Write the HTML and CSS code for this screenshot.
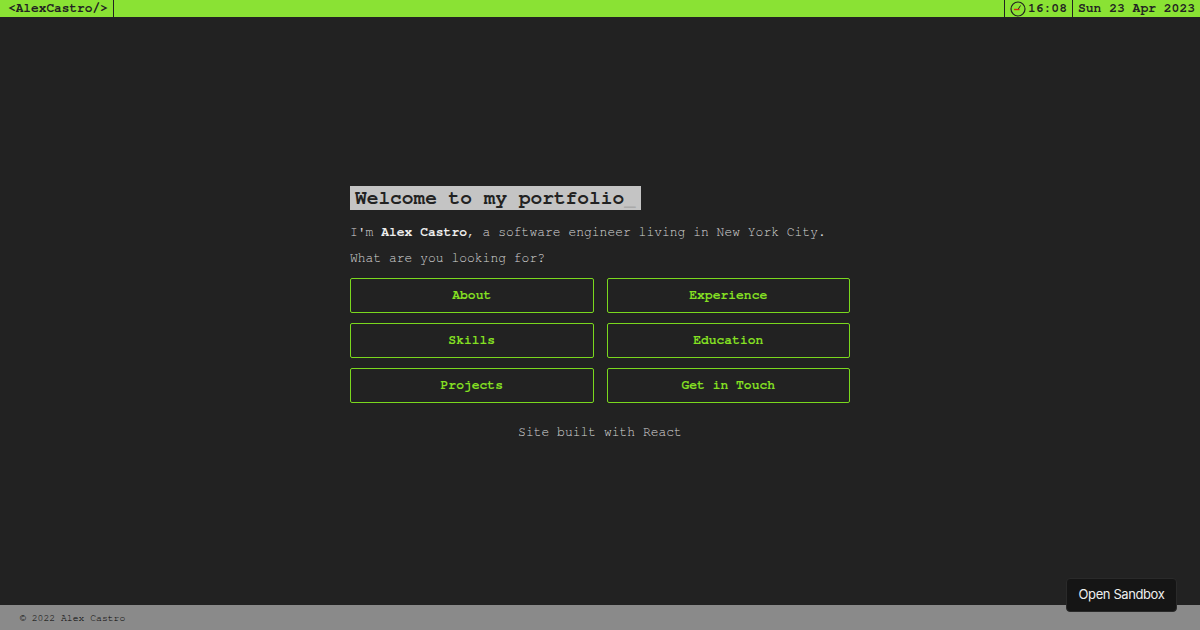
FILE: index.html
```html
<!DOCTYPE html>
<html lang="en">
<head>
<meta charset="utf-8">
<title>Alex Castro</title>
<link rel="stylesheet" href="styles.css">
</head>
<body>
<header class="topbar">
  <div class="brand">&lt;AlexCastro/&gt;</div>
  <div class="status">
    <div class="clock">
      <svg class="clock-icon" width="16" height="16" viewBox="0 0 16 16" aria-hidden="true">
        <circle cx="8" cy="8" r="7" fill="none" stroke="#222" stroke-width="1.2"/>
        <path d="M8 8.5 L10.5 4.5" stroke="#222" stroke-width="1" fill="none"/>
        <path d="M9.5 8.5 L4 8.5" stroke="#d02a10" stroke-width="1.4" fill="none"/>
      </svg>
      <span>16:08</span>
    </div>
    <div class="date">Sun 23 Apr 2023</div>
  </div>
</header>
<main class="main">
  <section class="panel">
    <h1 class="title">Welcome to my portfolio<span class="cursor">_</span></h1>
    <p class="line">I'm <strong>Alex Castro</strong>, a software engineer living in New York City.</p>
    <p class="line">What are you looking for?</p>
    <nav class="menu">
      <a class="menu-btn">About</a>
      <a class="menu-btn">Experience</a>
      <a class="menu-btn">Skills</a>
      <a class="menu-btn">Education</a>
      <a class="menu-btn">Projects</a>
      <a class="menu-btn">Get in Touch</a>
    </nav>
    <p class="built">Site built with React</p>
  </section>
</main>
<footer class="footer">© 2022 Alex Castro</footer>
<a class="sandbox">Open Sandbox</a>
</body>
</html>
```
FILE: styles.css
```css
* { box-sizing: border-box; }
html, body { height: 100%; }
body {
  margin: 0;
  height: 630px;
  overflow: hidden;
  display: flex;
  flex-direction: column;
  background: #222;
  color: #d8d8d8;
  font-family: FreeMono, "Liberation Mono", monospace;
  font-size: 13px;
}
.topbar {
  height: 17px;
  flex: none;
  display: flex;
  justify-content: space-between;
  background: #8ae234;
  color: #222;
  font-weight: bold;
  line-height: 17px;
}
.brand {
  padding: 0 5px 0 8px;
  border-right: 1px solid #222;
  font-size: 12.8px;
}
.status { display: flex; }
.clock {
  display: flex;
  align-items: center;
  gap: 2px;
  padding: 0 5px;
  border-left: 1px solid #222;
}
.clock-icon { flex: none; }
.date {
  padding: 0 5px;
  border-left: 1px solid #222;
}
.main {
  flex: 1;
  display: flex;
  justify-content: center;
  align-items: center;
}
.panel {
  width: 500px;
  margin-top: 4px;
}
.title {
  display: inline-block;
  margin: 0 0 15px;
  padding: 0 5px;
  background: #c4c4c4;
  color: #222;
  font-size: 19.5px;
  line-height: 24px;
  font-weight: bold;
}
.cursor { color: #aaa; }
.line {
  margin: 0 0 11px;
  line-height: 15px;
}
.line strong { color: #eee; }
.menu {
  display: grid;
  grid-template-columns: 1fr 1fr;
  column-gap: 13px;
  row-gap: 10px;
  margin-top: 12px;
}
.menu-btn {
  height: 35px;
  display: flex;
  align-items: center;
  justify-content: center;
  border: 1px solid #7ad81e;
  border-radius: 2px;
  color: #85e022;
  font-weight: bold;
}
.built {
  margin: 22px 0 0;
  text-align: center;
  line-height: 15px;
}
.footer {
  height: 25px;
  flex: none;
  padding: 0 20px;
  background: #8a8a8a;
  color: #000;
  font-size: 9.75px;
  line-height: 27px;
}
.sandbox {
  position: absolute;
  left: 1066px;
  top: 578px;
  width: 111px;
  height: 34px;
  display: flex;
  align-items: center;
  justify-content: center;
  background: #151515;
  border: 1px solid #2a2a2a;
  border-radius: 4px;
  color: #eee;
  font-family: Inter, sans-serif;
  font-size: 13px;
  letter-spacing: -0.4px;
  padding-bottom: 2px;
}
```
